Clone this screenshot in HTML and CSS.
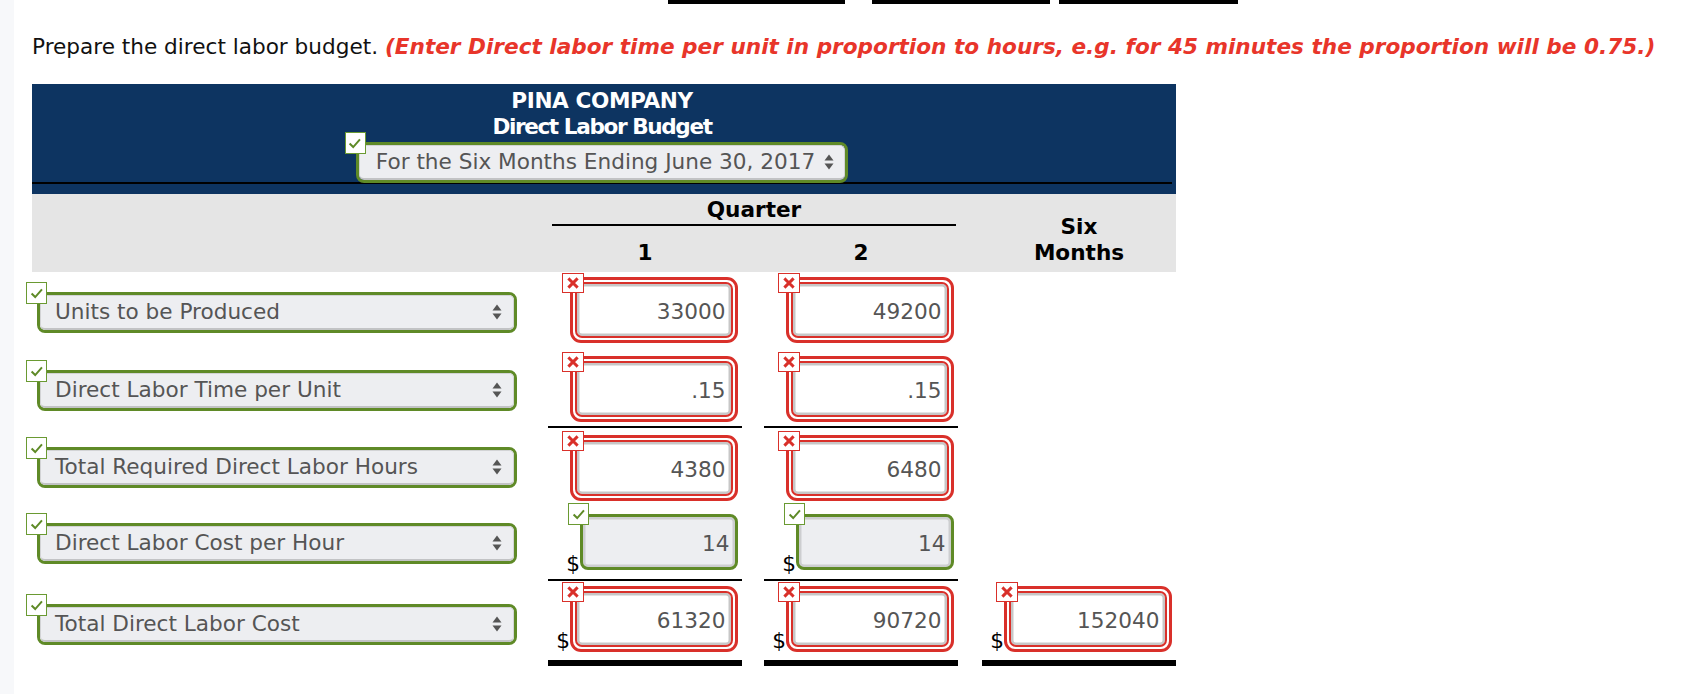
FILE: index.html
```html
<!DOCTYPE html>
<html lang="en">
<head>
<meta charset="utf-8">
<title>Direct Labor Budget</title>
<link rel="stylesheet" href="styles.css">
</head>
<body>
<div class="page">
  <div class="rail"></div>
  <div class="main">
    <div class="bars"><span class="bar b1"></span><span class="bar b2"></span><span class="bar b3"></span></div>
    <p class="prompt">Prepare the direct labor budget. <em class="note">(Enter Direct labor time per unit in proportion to hours, e.g. for 45 minutes the proportion will be 0.75.)</em></p>

    <div class="tbl">
      <div class="tb-head">
        <div class="title">
          <div class="tline t1">PINA COMPANY</div>
          <div class="tline t2">Direct Labor Budget</div>
          <div class="sel hsel">
            <span class="mark ok"><svg viewBox="0 0 20 20" width="18" height="18"><polyline points="4,10.5 8,14.5 15.5,6" fill="none" stroke="#5e8a26" stroke-width="2.2"/></svg></span>
            <div class="sel-in"><span class="sel-txt">For the Six Months Ending June 30, 2017</span><svg class="arr" viewBox="0 0 10 16" width="10" height="16"><polygon points="5,0.5 9.5,6.5 0.5,6.5" fill="#555"/><polygon points="0.5,9.5 9.5,9.5 5,15.5" fill="#555"/></svg></div>
          </div>
        </div>
      </div>

      <div class="colhead">
        <div class="qtr"><div class="qtr-in">Quarter</div></div>
        <div class="six"><div class="hc">Six<br>Months</div></div>
        <div class="num n1"><div class="hc">1</div></div>
        <div class="num n2"><div class="hc">2</div></div>
      </div>

      <div class="row r1">
        <div class="lab"><div class="sel lsel"><span class="mark ok"><svg viewBox="0 0 20 20" width="18" height="18"><polyline points="4,10.5 8,14.5 15.5,6" fill="none" stroke="#5e8a26" stroke-width="2.2"/></svg></span><div class="sel-in"><span class="sel-txt">Units to be Produced</span><svg class="arr" viewBox="0 0 10 16" width="10" height="16"><polygon points="5,0.5 9.5,6.5 0.5,6.5" fill="#555"/><polygon points="0.5,9.5 9.5,9.5 5,15.5" fill="#555"/></svg></div></div></div>
        <div class="c"><div class="fld bad"><span class="mark no"><svg viewBox="0 0 20 18" width="18" height="16"><path d="M6 5 L14 13 M14 5 L6 13" stroke="#d9302a" stroke-width="3.4" stroke-linecap="square"/></svg></span><div class="ring"><div class="box">33000</div></div></div></div>
        <div class="c"><div class="fld bad"><span class="mark no"><svg viewBox="0 0 20 18" width="18" height="16"><path d="M6 5 L14 13 M14 5 L6 13" stroke="#d9302a" stroke-width="3.4" stroke-linecap="square"/></svg></span><div class="ring"><div class="box">49200</div></div></div></div>
        <div class="c blank"></div>
      </div>

      <div class="row r2">
        <div class="lab"><div class="sel lsel"><span class="mark ok"><svg viewBox="0 0 20 20" width="18" height="18"><polyline points="4,10.5 8,14.5 15.5,6" fill="none" stroke="#5e8a26" stroke-width="2.2"/></svg></span><div class="sel-in"><span class="sel-txt">Direct Labor Time per Unit</span><svg class="arr" viewBox="0 0 10 16" width="10" height="16"><polygon points="5,0.5 9.5,6.5 0.5,6.5" fill="#555"/><polygon points="0.5,9.5 9.5,9.5 5,15.5" fill="#555"/></svg></div></div></div>
        <div class="c ul"><div class="fld bad"><span class="mark no"><svg viewBox="0 0 20 18" width="18" height="16"><path d="M6 5 L14 13 M14 5 L6 13" stroke="#d9302a" stroke-width="3.4" stroke-linecap="square"/></svg></span><div class="ring"><div class="box">.15</div></div></div></div>
        <div class="c ul"><div class="fld bad"><span class="mark no"><svg viewBox="0 0 20 18" width="18" height="16"><path d="M6 5 L14 13 M14 5 L6 13" stroke="#d9302a" stroke-width="3.4" stroke-linecap="square"/></svg></span><div class="ring"><div class="box">.15</div></div></div></div>
        <div class="c blank"></div>
      </div>

      <div class="row r3">
        <div class="lab"><div class="sel lsel"><span class="mark ok"><svg viewBox="0 0 20 20" width="18" height="18"><polyline points="4,10.5 8,14.5 15.5,6" fill="none" stroke="#5e8a26" stroke-width="2.2"/></svg></span><div class="sel-in"><span class="sel-txt">Total Required Direct Labor Hours</span><svg class="arr" viewBox="0 0 10 16" width="10" height="16"><polygon points="5,0.5 9.5,6.5 0.5,6.5" fill="#555"/><polygon points="0.5,9.5 9.5,9.5 5,15.5" fill="#555"/></svg></div></div></div>
        <div class="c"><div class="fld bad"><span class="mark no"><svg viewBox="0 0 20 18" width="18" height="16"><path d="M6 5 L14 13 M14 5 L6 13" stroke="#d9302a" stroke-width="3.4" stroke-linecap="square"/></svg></span><div class="ring"><div class="box">4380</div></div></div></div>
        <div class="c"><div class="fld bad"><span class="mark no"><svg viewBox="0 0 20 18" width="18" height="16"><path d="M6 5 L14 13 M14 5 L6 13" stroke="#d9302a" stroke-width="3.4" stroke-linecap="square"/></svg></span><div class="ring"><div class="box">6480</div></div></div></div>
        <div class="c blank"></div>
      </div>

      <div class="row r4">
        <div class="lab"><div class="sel lsel"><span class="mark ok"><svg viewBox="0 0 20 20" width="18" height="18"><polyline points="4,10.5 8,14.5 15.5,6" fill="none" stroke="#5e8a26" stroke-width="2.2"/></svg></span><div class="sel-in"><span class="sel-txt">Direct Labor Cost per Hour</span><svg class="arr" viewBox="0 0 10 16" width="10" height="16"><polygon points="5,0.5 9.5,6.5 0.5,6.5" fill="#555"/><polygon points="0.5,9.5 9.5,9.5 5,15.5" fill="#555"/></svg></div></div></div>
        <div class="c ul"><span class="cur">$</span><div class="fld good"><span class="mark ok"><svg viewBox="0 0 20 20" width="18" height="18"><polyline points="4,10.5 8,14.5 15.5,6" fill="none" stroke="#5e8a26" stroke-width="2.2"/></svg></span><div class="box">14</div></div></div>
        <div class="c ul"><span class="cur">$</span><div class="fld good"><span class="mark ok"><svg viewBox="0 0 20 20" width="18" height="18"><polyline points="4,10.5 8,14.5 15.5,6" fill="none" stroke="#5e8a26" stroke-width="2.2"/></svg></span><div class="box">14</div></div></div>
        <div class="c blank"></div>
      </div>

      <div class="row r5">
        <div class="lab"><div class="sel lsel"><span class="mark ok"><svg viewBox="0 0 20 20" width="18" height="18"><polyline points="4,10.5 8,14.5 15.5,6" fill="none" stroke="#5e8a26" stroke-width="2.2"/></svg></span><div class="sel-in"><span class="sel-txt">Total Direct Labor Cost</span><svg class="arr" viewBox="0 0 10 16" width="10" height="16"><polygon points="5,0.5 9.5,6.5 0.5,6.5" fill="#555"/><polygon points="0.5,9.5 9.5,9.5 5,15.5" fill="#555"/></svg></div></div></div>
        <div class="c dul"><span class="cur">$</span><div class="fld bad"><span class="mark no"><svg viewBox="0 0 20 18" width="18" height="16"><path d="M6 5 L14 13 M14 5 L6 13" stroke="#d9302a" stroke-width="3.4" stroke-linecap="square"/></svg></span><div class="ring"><div class="box">61320</div></div></div></div>
        <div class="c dul"><span class="cur">$</span><div class="fld bad"><span class="mark no"><svg viewBox="0 0 20 18" width="18" height="16"><path d="M6 5 L14 13 M14 5 L6 13" stroke="#d9302a" stroke-width="3.4" stroke-linecap="square"/></svg></span><div class="ring"><div class="box">90720</div></div></div></div>
        <div class="c dul"><span class="cur">$</span><div class="fld bad"><span class="mark no"><svg viewBox="0 0 20 18" width="18" height="16"><path d="M6 5 L14 13 M14 5 L6 13" stroke="#d9302a" stroke-width="3.4" stroke-linecap="square"/></svg></span><div class="ring"><div class="box">152040</div></div></div></div>
      </div>
    </div>
  </div>
</div>
</body>
</html>
```

FILE: styles.css
```css
* { box-sizing: border-box; }
html, body { margin: 0; padding: 0; background: #fff; }
body {
  font-family: "DejaVu Sans", Verdana, sans-serif;
  font-size: 21.6px;
  line-height: 26px;
  color: #111;
}
.page { display: flex; min-height: 694px; }
.rail { width: 14px; flex: none; background: #f7f8fa; }
.main { flex: 1; padding-left: 18px; }

.bars { display: flex; height: 4px; margin-left: 636px; }
.bar { display: block; height: 4px; background: #000; }
.b1 { width: 177px; }
.b2 { width: 178px; margin-left: 27px; }
.b3 { width: 179px; margin-left: 9px; }

.prompt { margin: 29.5px 0 0; height: 26px; white-space: nowrap; }
.note { color: #e8352a; font-weight: bold; font-style: italic; }

.tbl { width: 1144px; margin-top: 24.5px; }

.tb-head { background: #0d3461; padding: 4px 4px 10px 0; }
.title {
  border-bottom: 2px solid #000;
  text-align: center;
  color: #fff;
  font-weight: bold;
}
.tline { height: 26px; }
.t1 { letter-spacing: -0.4px; }
.t2 { letter-spacing: -1.4px; }

.sel { position: relative; border: 3px solid #5f8a27; border-radius: 8px; height: 41px; }
.sel-in {
  height: 100%;
  display: flex;
  align-items: center;
  background: #edeef1;
  border: 1px solid #d2d3d5;
  border-bottom: 2px solid #c2c3c5;
  border-radius: 5px;
  color: #555;
  font-weight: normal;
  letter-spacing: 0;
  padding: 0 9px 0 14px;
}
.sel-txt { flex: 1; text-align: left; white-space: nowrap; }
.arr { flex: none; margin-left: 6px; }
.hsel { display: inline-block; margin: 2px 0 -1px; vertical-align: top; }
.hsel .sel-in { padding-left: 16px; padding-right: 10px; }
.hsel .arr { margin-left: 9px; }
.lsel { width: 480px; }
.lsel .sel-in { padding-right: 11px; }

.mark {
  position: absolute;
  z-index: 2;
  display: flex;
  align-items: center;
  justify-content: center;
  background: #fff;
}
.mark.ok { width: 21px; height: 22px; border: 1.5px solid #6a9a32; left: -14px; top: -13px; }
.hsel .mark.ok { width: 21px; height: 22px; left: -14px; }
.mark.no { width: 22px; height: 20px; border: 1.5px solid #d9302a; left: -8px; top: -4px; }

.colhead {
  display: grid;
  grid-template-columns: 516px 216px 218px 194px;
  grid-template-rows: 32px 46px;
  background: #e5e5e5;
  font-weight: bold;
  color: #000;
  text-align: center;
}
.qtr { grid-column: 2 / 4; grid-row: 1; }
.qtr-in { margin-left: 4px; width: 404px; padding-top: 2.5px; height: 32px; border-bottom: 2px solid #000; }
.six { grid-column: 4; grid-row: 1 / 3; align-self: end; padding-bottom: 6.5px; }
.num { grid-row: 2; padding-top: 13.5px; }
.n1 { grid-column: 2; }
.n2 { grid-column: 3; }
.hc { width: 194px; }

.row { display: grid; grid-template-columns: 516px 216px 218px 194px; }
.lab { display: flex; align-items: center; padding-left: 5px; padding-top: 2px; }
.c {
  width: 194px;
  display: flex;
  justify-content: flex-end;
  align-items: flex-end;
  padding-right: 4px;
}
.r1 .c { padding-top: 5px; padding-bottom: 8px; }
.r2 .c { padding-top: 5px; padding-bottom: 4px; }
.r3 .c { padding-top: 7px; padding-bottom: 3px; }
.r4 .c { padding-top: 5px; padding-bottom: 4px; }
.r5 .c { padding-top: 5px; padding-bottom: 8px; }
.c.ul { border-bottom: 2px solid #000; }
.c.dul { border-bottom: 6px solid #000; }
.c.blank { min-height: 1px; }

.cur { color: #000; line-height: 26px; margin-bottom: -2px; }

.fld { position: relative; }
.ring {
  width: 168px;
  height: 66px;
  border: 3px solid #d9302a;
  border-radius: 11px;
  padding: 2px;
  background: #fff;
}
.box {
  height: 100%;
  color: #555;
  text-align: right;
  display: flex;
  align-items: center;
  justify-content: flex-end;
  padding-top: 3px;
}
.bad .box {
  border: 2.5px solid #d9302a;
  border-radius: 7px;
  box-shadow: inset 0 0 0 2.5px #c7c7c7;
  background: #fff;
  padding-right: 5.5px;
}
.good { margin: 5px 0; }
.good .box {
  width: 158px;
  height: 56px;
  border: 3px solid #5f8a27;
  border-radius: 8px;
  background: #edeef1;
  box-shadow: inset 0 0 0 2.5px #cdced0;
  padding-right: 5.5px;
}
.good .mark.ok { left: -12px; top: -11px; }
```
